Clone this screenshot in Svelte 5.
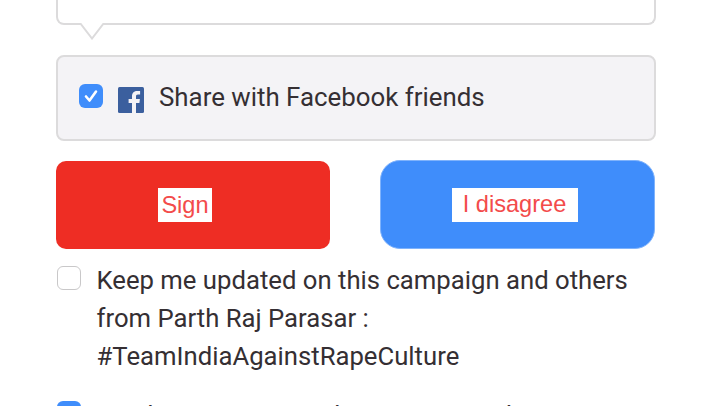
<script>
  let shareFacebook = $state(true);
  let keepUpdated = $state(false);
  let displayName = $state(true);
</script>

<div class="page">
  <div class="comment-box"></div>
  <svg class="tail" viewBox="0 0 28 17" aria-hidden="true">
    <path d="M2 0l12 15.500L26 0" fill="#fff" stroke="#dcdbdc" stroke-width="2" />
  </svg>

  <label class="share-box">
    <input class="check" type="checkbox" bind:checked={shareFacebook} />
    <svg class="fb" viewBox="0 0 26 26" aria-hidden="true">
      <rect width="26" height="26" rx="1.5" fill="#3b5f9e" />
      <path d="M18 26V16h3.400l.5-4H18V9.600c0-1.200.4-2 2-2h2.100V4.100C21.700 4 20.500 4 19.200 4 16.300 4 14 5.800 14 9.100V12h-3.400v4H14v10z" fill="#f4f3f6" />
    </svg>
    <span class="share-label">Share with Facebook friends</span>
  </label>

  <div class="actions">
    <button class="btn sign"><span>Sign</span></button>
    <button class="btn disagree"><span>I disagree</span></button>
  </div>

  <label class="option">
    <input class="check" type="checkbox" bind:checked={keepUpdated} />
    <span>Keep me updated on this campaign and others<br />from Parth Raj Parasar :<br />#TeamIndiaAgainstRapeCulture</span>
  </label>

  <label class="option last">
    <input class="check" type="checkbox" bind:checked={displayName} />
    <span>Display my name and comment on this petition</span>
  </label>
</div>

<style>
  :global(body) {
    margin: 0;
    background: #fff;
    overflow: hidden;
  }

  .page {
    width: 600px;
    height: 406px;
    margin-left: 56px;
    overflow: hidden;
    font-family: Roboto, "Noto Sans", sans-serif;
    color: #352f33;
  }

  .comment-box {
    box-sizing: border-box;
    height: 25px;
    border: 2px solid #dcdbdc;
    border-top: 0;
    border-radius: 0 0 8px 8px;
  }

  .tail {
    display: block;
    width: 28px;
    height: 17px;
    margin: -2px 0 0 22px;
  }

  .share-box {
    box-sizing: border-box;
    display: flex;
    align-items: center;
    height: 86px;
    margin-top: 15px;
    padding: 0 21px;
    background: #f4f3f6;
    border: 2px solid #dcdbdc;
    border-radius: 8px;
    font-size: 25.850px;
  }

  .share-label {
    margin-top: -2px;
  }

  .check {
    appearance: none;
    flex: none;
    box-sizing: border-box;
    width: 24px;
    height: 24px;
    margin: 0;
    background: #fff;
    border: 1.500px solid #c9c8c9;
    border-radius: 6px;
  }

  .check:checked {
    border: 0;
    background: #3f8dfb url("data:image/svg+xml,%3Csvg xmlns='http://www.w3.org/2000/svg' viewBox='0 0 24 24'%3E%3Cpath d='M7 12.500l3.500 4L17 7.500' fill='none' stroke='white' stroke-width='2.600' stroke-linecap='round' stroke-linejoin='round'/%3E%3C/svg%3E") center no-repeat;
  }

  .fb {
    flex: none;
    width: 26px;
    height: 26px;
    margin: 4px 15px 0 15px;
  }

  .share-box .check {
    margin-top: -4px;
  }

  .actions {
    display: flex;
    justify-content: space-between;
    align-items: flex-end;
    margin-top: 19px;
    padding-right: 1px;
  }

  .btn {
    box-sizing: border-box;
    display: flex;
    align-items: center;
    justify-content: center;
    padding: 0;
    border: 0;
    font-family: "Liberation Sans", Arial, sans-serif;
    font-size: 23.600px;
    color: #f34b4b;
  }

  .btn span {
    display: flex;
    align-items: center;
    justify-content: center;
    height: 34px;
    background: #fff;
  }

  .sign {
    width: 274px;
    height: 88px;
    padding-right: 16px;
    background: #ee2d24;
    border-radius: 10px;
  }

  .sign span {
    width: 54px;
  }

  .disagree {
    width: 275px;
    height: 89px;
    padding-right: 6px;
    background: #3f8dfb;
    border: 1px solid #7fb3fc;
    border-radius: 20px;
  }

  .disagree span {
    width: 126px;
  }

  .option {
    display: flex;
    gap: 15.500px;
    margin-top: 12px;
    font-size: 25.700px;
    line-height: 38px;
  }

  .option .check {
    margin: 5px 0 0 1px;
  }

  .last {
    margin-top: 21px;
  }
</style>
